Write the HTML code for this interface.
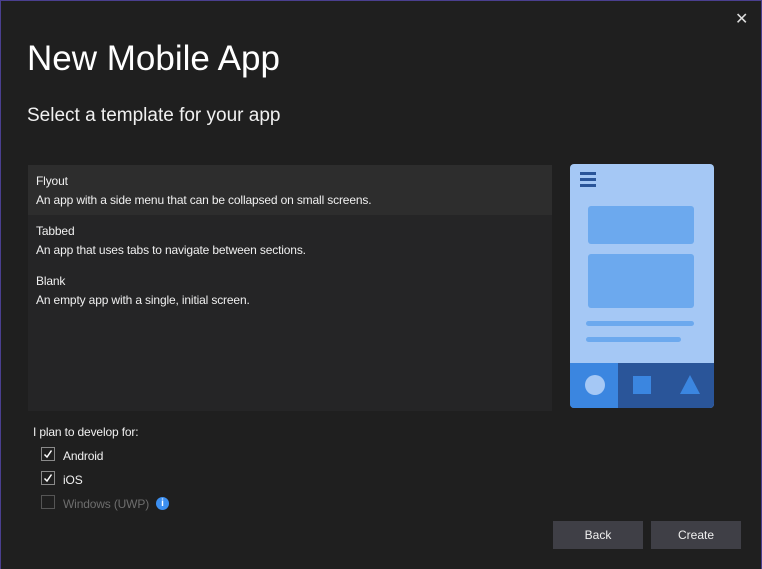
<!DOCTYPE html>
<html><head><style>
body{margin:0;width:762px;height:569px;background:#1f1f1f;font-family:"Segoe UI","Liberation Sans",sans-serif;color:#f0f0f0;position:relative;overflow:hidden}
.frame{position:absolute;left:0;top:0;width:760px;height:568px;border-top:1px solid #4a3f8f;border-left:1px solid #4a3f8f;border-right:1px solid #4a3f8f}
.a{position:absolute}
.t{font-size:12px;color:#f0f0f0;letter-spacing:-0.15px}
.cb{position:absolute;width:14px;height:14px;border:1px solid #8a8a8a;box-sizing:border-box}
.btn{position:absolute;top:521px;width:90px;height:28px;background:#3f3f46;font-size:12px;text-align:center;line-height:28px;color:#f0f0f0}
</style></head><body>
<div class="frame"></div>
<div class="a" style="left:735px;top:9px;font-size:16px;color:#ddd">✕</div>
<div class="a" style="left:27px;top:39px;font-size:35px;color:#fff">New Mobile App</div>
<div class="a" style="left:27px;top:105px;font-size:19px;color:#f0f0f0">Select a template for your app</div>
<div class="a" style="left:28px;top:165px;width:524px;height:246px;background:#252526"></div>
<div class="a" style="left:28px;top:165px;width:524px;height:50px;background:#2d2d2d"></div>
<div class="a t" style="left:36px;top:174px">Flyout</div>
<div class="a t" style="left:36px;top:193px">An app with a side menu that can be collapsed on small screens.</div>
<div class="a t" style="left:36px;top:224px">Tabbed</div>
<div class="a t" style="left:36px;top:243px">An app that uses tabs to navigate between sections.</div>
<div class="a t" style="left:36px;top:274px">Blank</div>
<div class="a t" style="left:36px;top:293px">An empty app with a single, initial screen.</div>
<svg class="a" style="left:570px;top:164px" width="144" height="244" viewBox="0 0 144 244">
<defs><clipPath id="c"><rect width="144" height="244" rx="4"/></clipPath></defs>
<g clip-path="url(#c)">
<rect width="144" height="244" fill="#a5c8f5"/>
<rect x="10" y="8" width="16" height="3" fill="#2a5599"/><rect x="10" y="14" width="16" height="3" fill="#2a5599"/><rect x="10" y="20" width="16" height="3" fill="#2a5599"/>
<rect x="18" y="42" width="106" height="38" rx="3" fill="#6ca9ee"/>
<rect x="18" y="90" width="106" height="54" rx="3" fill="#6ca9ee"/>
<rect x="16" y="157" width="108" height="5" rx="2.5" fill="#6ca9ee"/>
<rect x="16" y="173" width="95" height="5" rx="2.5" fill="#6ca9ee"/>
<rect x="0" y="199" width="144" height="45" fill="#2a5599"/>
<rect x="0" y="199" width="48" height="45" fill="#3b86e0"/>
<circle cx="25" cy="221" r="10" fill="#a5c8f5"/>
<rect x="63" y="212" width="18" height="18" fill="#3b86e0"/>
<polygon points="120,211 130,230 110,230" fill="#3b86e0"/>
</g></svg>
<div class="a t" style="left:33px;top:425px">I plan to develop for:</div>
<div class="cb" style="left:41px;top:447px"></div>
<svg class="a" style="left:41px;top:447px" width="14" height="14"><path d="M3.5 7.5 L6 10 L10.5 3.5" stroke="#fff" stroke-width="1.5" fill="none"/></svg>
<div class="a t" style="left:63px;top:449px">Android</div>
<div class="cb" style="left:41px;top:471px"></div>
<svg class="a" style="left:41px;top:471px" width="14" height="14"><path d="M3.5 7.5 L6 10 L10.5 3.5" stroke="#fff" stroke-width="1.5" fill="none"/></svg>
<div class="a t" style="left:63px;top:473px">iOS</div>
<div class="cb" style="left:41px;top:495px;border-color:#555"></div>
<div class="a t" style="left:63px;top:497px;color:#6d6d6d">Windows (UWP)</div>
<div class="a" style="left:156px;top:497px;width:13px;height:13px;border-radius:50%;background:#3c8ff0;color:#fff;font-size:10px;font-weight:bold;text-align:center;line-height:13px">i</div>
<div class="btn" style="left:553px">Back</div>
<div class="btn" style="left:651px">Create</div>
</body></html>
